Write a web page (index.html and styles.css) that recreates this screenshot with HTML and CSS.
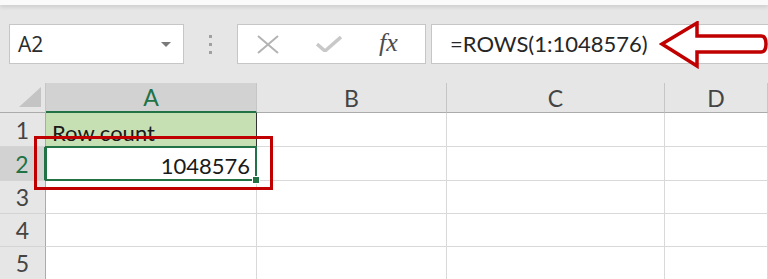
FILE: index.html
```html
<!DOCTYPE html>
<html lang="en">
<head>
    <meta charset="UTF-8">
    <title>ROWS</title>
    <link rel="stylesheet" href="styles.css">
</head>
<body>
    <div class="titlebar"></div>

    <!-- Barra de fórmulas -->
    <div class="toolbar">
        <div class="namebox">
            <span>A2</span>
            <svg class="caret" width="10" height="5" viewBox="0 0 10 5"><path d="M0 0H10L5 5Z" fill="#7a7a7a"/></svg>
        </div>
        <div class="grip"><i></i><i></i><i></i></div>
        <div class="fxbuttons">
            <svg width="22" height="19" viewBox="0 0 22 19"><path d="M1 1L21 18M21 1L1 18" stroke="#b3b3b3" stroke-width="2" fill="none"/></svg>
            <svg width="26" height="16" viewBox="0 0 26 16"><path d="M1 8L9 15L25 1" stroke="#c8c8c8" stroke-width="3.5" fill="none"/></svg>
            <span class="fx">fx</span>
        </div>
        <div class="formula">=ROWS(1:1048576)</div>
    </div>

    <!-- Planilha -->
    <div class="sheet">
        <div class="corner"><svg width="22" height="20" viewBox="0 0 22 20"><path d="M22 0V20H0Z" fill="#c4c4c4"/></svg></div>
        <div class="colhead active">A</div>
        <div class="colhead">B</div>
        <div class="colhead">C</div>
        <div class="colhead">D</div>

        <div class="rowhead">1</div>
        <div class="cell filled">Row count</div>
        <div class="cell"></div>
        <div class="cell"></div>
        <div class="cell"></div>

        <div class="rowhead active">2</div>
        <div class="cell num selected">1048576</div>
        <div class="cell"></div>
        <div class="cell"></div>
        <div class="cell"></div>

        <div class="rowhead">3</div>
        <div class="cell"></div>
        <div class="cell"></div>
        <div class="cell"></div>
        <div class="cell"></div>

        <div class="rowhead">4</div>
        <div class="cell"></div>
        <div class="cell"></div>
        <div class="cell"></div>
        <div class="cell"></div>

        <div class="rowhead">5</div>
        <div class="cell"></div>
        <div class="cell"></div>
        <div class="cell"></div>
        <div class="cell"></div>
    </div>

    <!-- Destaques -->
    <div class="highlight"></div>
    <svg class="arrow" width="110" height="48" viewBox="0 0 110 48">
        <path d="M3 23L38 2V15H102Q107 15 107 23Q107 31 102 31H38V45Z" fill="none" stroke="#c00000" stroke-width="3.5" stroke-linejoin="miter"/>
    </svg>
</body>
</html>
```

FILE: styles.css
```css
/* Estilo Global */
body {
    margin: 0;
    width: 768px;
    height: 279px;
    overflow: hidden;
    position: relative;
    background: #e6e6e6;
    font-family: 'Lato', 'Open Sans', sans-serif;
    color: #262626;
}

.titlebar {
    height: 5px;
    background: #fafafa;
    box-shadow: 0 2px 4px rgba(0, 0, 0, 0.12);
}

/* Barra de fórmulas */
.toolbar {
    display: flex;
    align-items: center;
    height: 40px;
    margin-top: 19px;
    padding-left: 9px;
}

.namebox {
    background: #fff;
    border: 1px solid #c6c6c6;
    display: flex;
    align-items: center;
    justify-content: space-between;
    padding: 0 12px 0 8px;
    box-sizing: border-box;
    width: 175px;
    height: 40px;
    font-family: 'Open Sans', sans-serif;
    font-size: 21px;
    color: #2b2b2b;
}

.grip {
    width: 53px;
    display: flex;
    flex-direction: column;
    align-items: center;
    gap: 5px;
}

.grip i {
    width: 3px;
    height: 3px;
    background: #a0a0a0;
}

.fxbuttons {
    width: 189px;
    height: 40px;
    box-sizing: border-box;
    background: #fff;
    border: 1px solid #c6c6c6;
    display: flex;
    align-items: center;
    padding-left: 19px;
    gap: 37px;
}

.fx {
    font-family: 'Liberation Serif', serif;
    font-style: italic;
    font-size: 26px;
    color: #4d4d4d;
    margin-top: -2px;
}

.formula {
    flex: 1;
    height: 40px;
    box-sizing: border-box;
    margin-left: 5px;
    background: #fff;
    border: 1px solid #c6c6c6;
    border-right: none;
    padding-left: 18px;
    font-size: 22px;
    line-height: 38px;
}

/* Planilha */
.sheet {
    display: grid;
    grid-template-columns: 46px 211px 190px 218px 1fr;
    grid-template-rows: 30px 34px 34px 33px 33px 33px;
    margin-top: 19px;
    background: #fff;
    font-size: 22px;
}

.corner,
.colhead,
.rowhead {
    background: #e6e6e6;
    color: #444;
    box-sizing: border-box;
    display: flex;
    align-items: center;
    justify-content: center;
    font-size: 23px;
}

.corner {
    border-right: 1px solid #c6c6c6;
    border-bottom: 1px solid #ababab;
    align-items: flex-end;
    justify-content: flex-end;
    padding: 0 4px 5px 0;
}

.colhead {
    border-right: 1px solid #c6c6c6;
    border-bottom: 1px solid #ababab;
}

.rowhead {
    border-right: 1px solid #ababab;
    border-bottom: 1px solid #d4d4d4;
}

.colhead.active {
    background: #d2d2d2;
    color: #217346;
    border-bottom: 2px solid #217346;
}

.rowhead.active {
    background: #d2d2d2;
    color: #217346;
    border-right: 2px solid #217346;
}

.cell {
    box-sizing: border-box;
    border-right: 1px solid #d9d9d9;
    border-bottom: 1px solid #d9d9d9;
    padding: 0 6px 0 6px;
    display: flex;
    align-items: flex-end;
    color: #1a1a1a;
}

.cell.filled {
    background: #c6e0b4;
    border-right: 1px solid #333;
}

.cell.num {
    justify-content: flex-end;
    padding-bottom: 1px;
}

.cell.selected {
    position: relative;
}

.cell.selected::after {
    content: "";
    position: absolute;
    left: -1px;
    top: -1px;
    right: -1px;
    bottom: -1px;
    border: 2px solid #217346;
}

.cell.selected::before {
    content: "";
    position: absolute;
    right: -4px;
    bottom: -4px;
    width: 6px;
    height: 6px;
    background: #217346;
    border: 1px solid #fff;
    z-index: 1;
}

.highlight {
    position: absolute;
    left: 34px;
    top: 136px;
    width: 233px;
    height: 48px;
    border: 3px solid #c00000;
}

.arrow {
    position: absolute;
    left: 659px;
    top: 21px;
}
```
